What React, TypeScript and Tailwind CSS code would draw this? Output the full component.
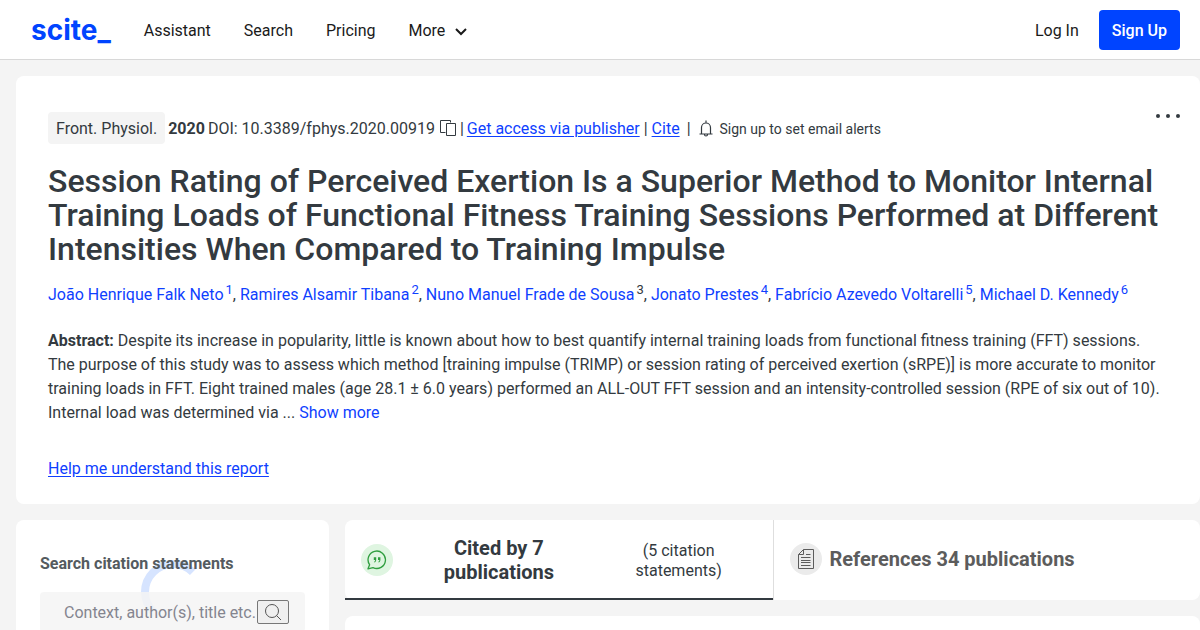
import type { ReactNode } from 'react';

interface Author {
  name: string;
  position: number;
  linked: boolean;
}

const navLinks = ['Assistant', 'Search', 'Pricing'];

const authors: Author[] = [
  { name: 'João Henrique Falk Neto', position: 1, linked: true },
  { name: 'Ramires Alsamir Tibana', position: 2, linked: true },
  { name: 'Nuno Manuel Frade de Sousa', position: 3, linked: false },
  { name: 'Jonato Prestes', position: 4, linked: true },
  { name: 'Fabrício Azevedo Voltarelli', position: 5, linked: true },
  { name: 'Michael D. Kennedy', position: 6, linked: true },
];

function Header() {
  return (
    <header className="flex h-[60px] items-center border-b border-[#d8d8d8] bg-white pr-5 pl-[31px] text-[#1a1a1a]">
      <a
        href="#"
        className="flex items-center font-['Inter',sans-serif] text-[28px] leading-8 font-bold text-[#0044ff]"
      >
        scite_
      </a>
      <nav className="ml-[33px] flex items-center gap-[33px] pt-0.5">
        {navLinks.map((label) => (
          <a key={label} href="#">
            {label}
          </a>
        ))}
        <button type="button" className="flex items-center gap-2">
          More
          <svg width="16" height="16" viewBox="0 0 16 16" fill="none">
            <path d="M3 6l5 5 5-5" stroke="currentColor" strokeWidth="2" />
          </svg>
        </button>
      </nav>
      <div className="ml-auto flex items-center gap-5">
        <a href="#" className="pt-0.5">
          Log In
        </a>
        <a
          href="#"
          className="flex h-10 items-center rounded bg-[#0044ff] px-[13px] pt-0.5 font-medium text-white"
        >
          Sign Up
        </a>
      </div>
    </header>
  );
}

function TextLink({ children }: { children: ReactNode }) {
  return (
    <a href="#" className="text-[#0f3fff] underline underline-offset-2">
      {children}
    </a>
  );
}

function Report() {
  return (
    <article className="rounded-lg bg-white px-8 pt-9 pb-[23px]">
      <div className="flex items-start justify-between">
        <div className="flex h-8 items-center gap-[3px] pt-px whitespace-nowrap">
          <span className="-mt-px flex h-8 items-center rounded bg-[#f4f4f4] px-2 pt-0.5">
            Front. Physiol.
          </span>
          <strong className="font-bold">2020</strong>
          <span>DOI: 10.3389/fphys.2020.00919</span>
          <button type="button" aria-label="Copy DOI" className="ml-0.5">
            <svg width="17" height="17" viewBox="0 0 17 17" fill="none">
              <path
                d="M5.5 12.5h-5V.5h10v2M6.5 3.5h9v12h-9z"
                stroke="currentColor"
              />
            </svg>
          </button>
          <span>|</span>
          <TextLink>Get access via publisher</TextLink>
          <span className="mx-px">|</span>
          <TextLink>Cite</TextLink>
          <span className="ml-1">|</span>
          <button
            type="button"
            className="ml-1 flex items-center gap-1.5 text-sm"
          >
            <svg width="16" height="18" viewBox="0 0 16 18" fill="none">
              <path
                d="M1.5 14h13M3.5 14V7.5a4.5 4.5 0 0 1 9 0V14M8 3V.5M6.5 14.5a1.5 1.5 0 0 0 3 0"
                stroke="currentColor"
                strokeWidth="1.2"
              />
            </svg>
            Sign up to set email alerts
          </button>
        </div>
        <button type="button" aria-label="More options" className="-mr-3">
          <svg width="24" height="8" viewBox="0 0 24 8" fill="currentColor">
            <circle cx="2" cy="4" r="2" />
            <circle cx="12" cy="4" r="2" />
            <circle cx="22" cy="4" r="2" />
          </svg>
        </button>
      </div>
      <h1 className="mt-5 text-[32px] leading-[34px] font-medium">
        Session Rating of Perceived Exertion Is a Superior Method to Monitor
        Internal Training Loads of Functional Fitness Training Sessions
        Performed at Different Intensities When Compared to Training Impulse
      </h1>
      <p className="mt-[17px] h-6">
        {authors.map((author, i) => (
          <span key={author.name}>
            {i > 0 && ', '}
            <a href="#" className="text-[#0f3fff]">
              {author.name}
            </a>
            <sup
              className={
                author.linked
                  ? 'ml-0.5 text-[13px] text-[#0f3fff]'
                  : 'ml-0.5 text-[13px]'
              }
            >
              {author.position}
            </sup>
          </span>
        ))}
      </p>
      <p className="mt-[22px]">
        <strong className="font-bold">Abstract:</strong> Despite its increase in
        popularity, little is known about how to best quantify internal training
        loads from functional fitness training (FFT) sessions. The purpose of
        this study was to assess which method [training impulse (TRIMP) or
        session rating of perceived exertion (sRPE)] is more accurate to monitor
        training loads in FFT. Eight trained males (age 28.1 ± 6.0 years)
        performed an ALL-OUT FFT session and an intensity-controlled session
        (RPE of six out of 10). Internal load was determined via ...{' '}
        <a href="#" className="text-[#0f3fff]">
          Show more
        </a>
      </p>
      <p className="mt-8">
        <TextLink>Help me understand this report</TextLink>
      </p>
    </article>
  );
}

function SearchPanel() {
  return (
    <aside className="relative w-[313px] shrink-0 rounded-lg bg-white px-6 pt-8 pb-6">
      {/* loading spinner behind the form */}
      <svg
        className="absolute top-10 left-[125px]"
        width="64"
        height="64"
        viewBox="0 0 64 64"
        fill="none"
      >
        <path
          d="M51.8 12.2A28 28 0 0 0 12.2 51.8"
          stroke="#d6e4ff"
          strokeWidth="8"
        />
      </svg>
      <div className="relative">
        <label htmlFor="citation-search" className="font-bold text-[#545b60]">
          Search citation statements
        </label>
        <div className="mt-4 flex h-10 items-center rounded bg-[#f4f4f4]/85 pr-4 pl-6">
          <input
            id="citation-search"
            type="text"
            placeholder="Context, author(s), title etc."
            className="min-w-0 flex-1 bg-transparent pt-0.5 outline-none placeholder:text-[#84858f]"
          />
          <button
            type="button"
            aria-label="Search"
            className="flex h-6 w-8 items-center justify-center rounded-xs border border-[#777] bg-[#efefef] text-[#555]"
          >
            <svg width="18" height="18" viewBox="0 0 18 18" fill="none">
              <circle cx="8" cy="8" r="6.5" stroke="currentColor" />
              <path d="M12.5 12.5l4.5 4.5" stroke="currentColor" />
            </svg>
          </button>
        </div>
      </div>
    </aside>
  );
}

function Tabs() {
  return (
    <div className="grid grid-cols-2 rounded-lg bg-white">
      <button
        type="button"
        className="flex h-20 items-center rounded-tl-lg border-b-2 border-[#333a40] pt-0.5 pr-3 pl-4"
      >
        <span className="flex size-8 shrink-0 items-center justify-center rounded-full bg-[#dff5e1]">
          <svg width="20" height="20" viewBox="0 0 20 20" fill="none">
            <path
              d="M1 18.8l1.6-4.1A8.7 8.7 0 1 1 6 17.6z"
              stroke="#2f9e3f"
              strokeWidth="1.3"
              strokeLinejoin="round"
            />
            <path
              d="M6.8 7.2h2.4v2.6c0 1.5-.7 2.4-1.9 2.8v-1c.6-.3.9-.8.9-1.5H6.8zM11 7.2h2.4v2.6c0 1.5-.7 2.4-1.9 2.8v-1c.6-.3.9-.8.9-1.5H11z"
              fill="#2f9e3f"
            />
          </svg>
        </span>
        <span className="flex flex-1 justify-around pl-2">
          <span className="w-32 text-xl leading-6 font-bold">
            Cited by 7 publications
          </span>
          <span className="w-24 self-center pt-0.5 leading-5">
            (5 citation statements)
          </span>
        </span>
      </button>
      <button
        type="button"
        className="flex h-20 items-center gap-2 border-l border-[#dedede] px-4 pb-0.5 text-[#5c5c5c]"
      >
        <span className="flex size-8 items-center justify-center rounded-full bg-[#ebebeb]">
          <svg width="16" height="20" viewBox="0 0 16 20" fill="none">
            <path
              d="M5.5.5h10v19H.5v-14zM5.5.5v5h-5"
              stroke="currentColor"
              strokeLinejoin="round"
            />
            <path
              d="M8 5.5h4.5M3 8.5h9.5M3 11.5h9.5M3 13.5h9.5M3 16.5h9.5"
              stroke="currentColor"
            />
          </svg>
        </span>
        <span className="text-xl leading-6 font-bold">
          References 34 publications
        </span>
      </button>
    </div>
  );
}

export default function App() {
  return (
    <div className="h-screen overflow-hidden bg-[#f4f4f4] font-['Roboto','Liberation_Sans',sans-serif] text-base text-[#333a40]">
      <Header />
      <main className="mt-4 flex flex-col gap-4 pl-4">
        <Report />
        <div className="flex gap-4">
          <SearchPanel />
          <section className="flex flex-1 flex-col gap-4">
            <Tabs />
            <div className="h-24 rounded-lg bg-white" />
          </section>
        </div>
      </main>
    </div>
  );
}
